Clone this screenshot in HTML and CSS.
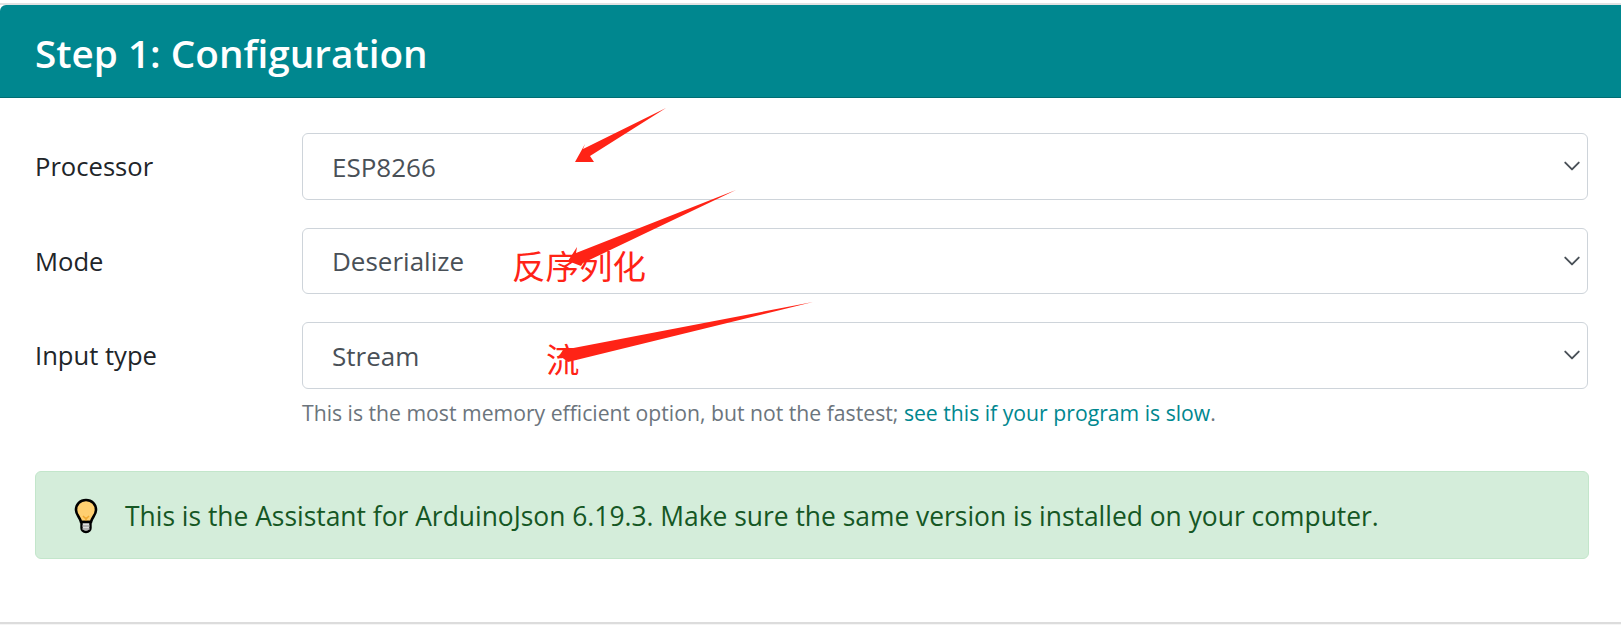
FILE: index.html
```html
<!DOCTYPE html>
<html lang="en">

<head>
    <meta charset="UTF-8">
    <meta name="viewport" content="width=device-width, initial-scale=1.0">
    <title>ArduinoJson Assistant</title>
    <link rel="stylesheet" href="styles.css">
</head>

<body>
    <div class="card">
        <div class="card-header">Step 1: Configuration</div>
        <div class="card-body">
            <div class="form-row">
                <label class="form-label">Processor</label>
                <div class="form-field">
                    <select class="form-select"><option>ESP8266</option></select>
                </div>
            </div>
            <div class="form-row">
                <label class="form-label">Mode</label>
                <div class="form-field">
                    <select class="form-select"><option>Deserialize</option></select>
                </div>
            </div>
            <div class="form-row">
                <label class="form-label">Input type</label>
                <div class="form-field">
                    <select class="form-select"><option>Stream</option></select>
                    <div class="help">This is the most memory efficient option, but not the fastest; <a href="#">see this if your program is slow</a>.</div>
                </div>
            </div>
            <div class="alert">
                <svg class="bulb" viewBox="0 0 24 36" width="24" height="36">
                    <path d="M12 2C6 2 2 6.500 2 12c0 5 4 7 5 12h10c1-5 5-7 5-12 0-5.500-4-10-10-10z" fill="#ffcf70" stroke="#000" stroke-width="2.600"/>
                    <path d="M9 18l2 2h2l2-2M12 20v4" fill="none" stroke="#f0a830" stroke-width="1.500"/>
                    <path d="M7.500 24h9v6c0 2-1.500 4-4.500 4s-4.500-2-4.500-4z" fill="#ddd" stroke="#000" stroke-width="2.400"/>
                    <path d="M8 28h8M8 31h8" stroke="#888" stroke-width="1"/>
                </svg>
                <span>This is the Assistant for ArduinoJson 6.19.3. Make sure the same version is installed on your computer.</span>
            </div>
        </div>
    </div>
    <div class="footer-line"></div>

    <!-- red annotations drawn on top of the screenshot -->
    <svg class="marks" viewBox="0 0 1621 625" width="1621" height="625">
        <polygon points="666,108 590,156 594,162 575,162 585,144 583,149" />
        <polygon points="736,190 583,263 581,266 568,261 577,247 576,253" />
        <polygon points="813,302 568,362 560,356 563,350" />
    </svg>
    <div class="note note-mode">反序列化</div>
    <div class="note note-input">流</div>
</body>

</html>
```

FILE: styles.css
```css
body {
    margin: 0;
    padding: 0;
    height: 625px;
    overflow: hidden;
    position: relative;
    background-color: white;
    font-family: "Open Sans", "Noto Sans", sans-serif;
    color: #212529;
    border-top: 3px solid white;
    box-sizing: border-box;
}

.card {
    border-top: 2px solid #e2e2e2;
}

.card-header {
    background-color: #00878f;
    color: white;
    height: 89px;
    padding-top: 3px;
    border-bottom: 1px solid #006d73;
    border-top-left-radius: 6px;
    display: flex;
    align-items: center;
    padding-left: 35px;
    font-size: 38.700px;
    font-weight: 600;
}

.card-body {
    padding: 35px 32px 0 35px;
}

.form-row {
    display: flex;
    margin-bottom: 28px;
}

.form-label {
    width: 267px;
    height: 66.500px;
    line-height: 68px;
    font-size: 25.600px;
}

.form-field {
    flex: 1;
    margin-right: 1px;
}

.form-select {
    display: block;
    width: 100%;
    height: 66.500px;
    padding: 1px 60px 0 29px;
    box-sizing: border-box;
    appearance: none;
    background: white url("data:image/svg+xml,%3csvg xmlns='http://www.w3.org/2000/svg' viewBox='0 0 16 16'%3e%3cpath fill='none' stroke='%23495057' stroke-linecap='round' stroke-linejoin='round' stroke-width='1.700' d='M2 5l6 6 6-6'/%3e%3c/svg%3e") no-repeat right 6px center / 18px 18px;
    border: 1px solid #ced4da;
    border-radius: 6px;
    font-family: inherit;
    font-size: 26px;
    color: #495057;
}

.help {
    margin-top: 9px;
    font-size: 21.200px;
    color: #6c757d;
}

.help a {
    color: #00878f;
    text-decoration: none;
}

.alert {
    display: flex;
    align-items: center;
    height: 88px;
    box-sizing: border-box;
    margin-top: 44px;
    padding-top: 2px;
    padding-left: 38px;
    background-color: #d4edda;
    border: 1px solid #c3e6cb;
    border-radius: 6px;
    color: #155724;
    font-size: 26.400px;
}

.bulb {
    margin-right: 27px;
}

.footer-line {
    position: absolute;
    left: 0;
    right: 0;
    top: 619px;
    height: 3px;
    border-top: 2px solid #dcdcdc;
    background-color: #f5f5f5;
}

.marks {
    position: absolute;
    left: 0;
    top: -3px;
}

.marks polygon {
    fill: #ff2316;
}

.note {
    position: absolute;
    font-family: "Noto Sans CJK SC", sans-serif;
    font-size: 33.500px;
    line-height: 33px;
    color: #ff2316;
}

.note-mode {
    left: 512px;
    top: 245px;
}

.note-input {
    left: 546px;
    top: 338px;
}
```
